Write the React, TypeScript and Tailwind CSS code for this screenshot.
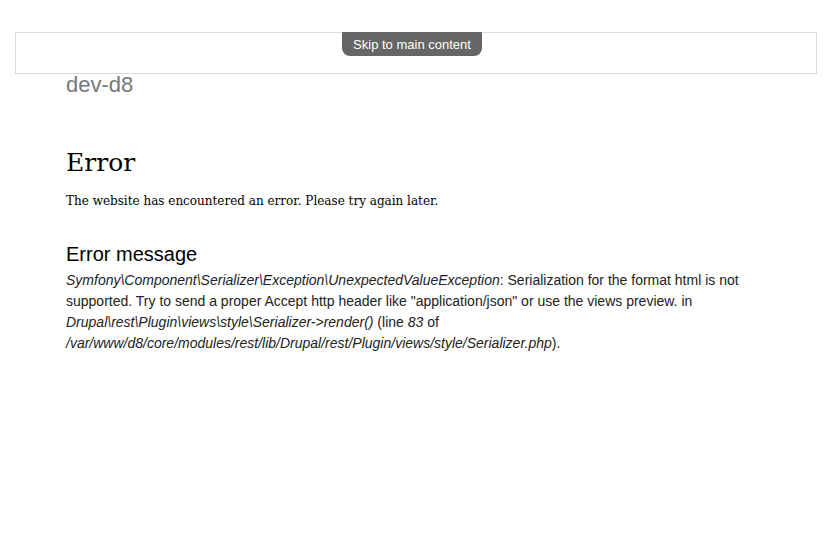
export default function App() {
  return (
    <div className="bg-white min-h-screen font-['Liberation_Sans',Arial,sans-serif] text-black">
      <div className="pt-8 pl-[15px] pr-[9px] relative">
        <header className="h-[42px] border border-[#dddddd]" />
        <a
          href="#main"
          className="absolute top-8 left-[342px] w-[140px] h-6 bg-[#666666] rounded-b-lg text-white text-[13px] flex items-center justify-center pt-px"
        >
          Skip to main content
        </a>
      </div>

      <main id="main" className="px-[66px]">
        <div className="text-[22px] leading-6 text-[#777777] -mt-px">dev-d8</div>

        <h1 className="mt-[50px] font-['DejaVu_Serif','Liberation_Serif',serif] text-[25px] leading-8 font-normal">
          Error
        </h1>
        <p className="mt-3 font-['DejaVu_Serif','Liberation_Serif',serif] text-xs leading-5">
          The website has encountered an error. Please try again later.
        </p>

        <h2 className="mt-[28px] text-xl leading-[31px]">Error message</h2>
        <p className="text-sm leading-[21px] text-[#222222] max-w-[690px]">
          <em>Symfony\Component\Serializer\Exception\UnexpectedValueException</em>: Serialization for the format html is not supported. Try to send a proper Accept http header like "application/json" or use the views preview. in{" "}
          <em>Drupal\rest\Plugin\views\style\Serializer-&gt;render()</em> (line <em>83</em> of{" "}
          <em>/var/www/d8/core/modules/rest/lib/Drupal/rest/Plugin/views/style/Serializer.php</em>).
        </p>
      </main>
    </div>
  );
}
